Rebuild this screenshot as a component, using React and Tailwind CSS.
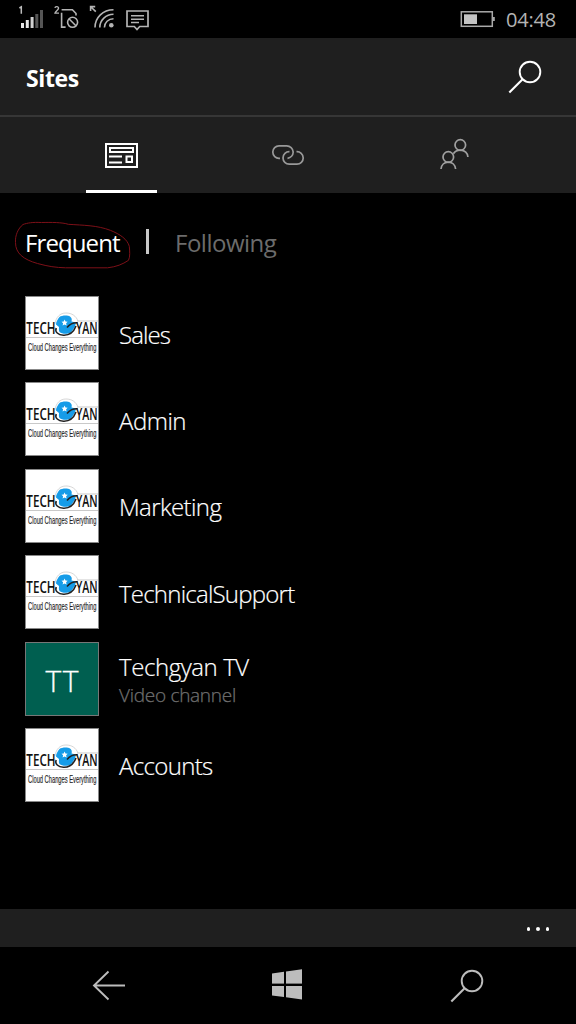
import React from "react";

function SearchIcon({ className }) {
  return (
    <svg className={className} width="34" height="34" viewBox="0 0 34 34" fill="none" stroke="currentColor">
      <circle cx="22" cy="12" r="10.3" strokeWidth="1.9" />
      <path d="M14.6 19.2 1.3 32.4" strokeWidth="2.1" />
    </svg>
  );
}

function StatusBar() {
  return (
    <div className="flex h-[38px] shrink-0 items-start justify-between bg-black text-[#b4b4b4]">
      <div className="flex">
        <svg className="ml-4" width="30" height="34" viewBox="16 0 30 34">
          <path d="M19.4 8 21.3 6.8v7" fill="none" stroke="#bbb" strokeWidth="1.5" />
          <path d="M21 23h3v5h-3zM25.8 20h3v8h-3z" fill="#e8e8e8" />
          <path d="M30.6 17h3v11h-3z" fill="#d0d0d0" />
          <path d="M35.3 14h3v14h-3zM40 10h3v18h-3z" fill="#555" />
        </svg>
        <svg className="ml-[6px]" width="30" height="34" viewBox="52 0 30 34" fill="none" stroke="currentColor" strokeWidth="1.6">
          <path d="M55 8c.2-2 3.8-1.8 3.5.4-.2 1.6-3.1 3-3.5 4.7h4" strokeWidth="1.4" />
          <path d="M61.6 12.8v14.3h4M61.6 9.8h10.8l3.6 3.7v2" />
          <circle cx="72.6" cy="22.3" r="5" />
          <path d="m69.2 19 6.7 6.7" />
        </svg>
        <svg className="ml-[6px]" width="30" height="34" viewBox="88 0 30 34" fill="none" stroke="currentColor" strokeWidth="1.6">
          <path d="M90.6 11V6.6h4.6M91 7l4.8 4.6" />
          <path d="M95 27.5C95 17.5 103 9.7 113.5 9.7M99.8 27.5c0-7.2 6.2-13.2 13.7-13.2M104.4 27.5c0-4.9 4.1-8.8 9.1-8.8" />
          <circle cx="111.3" cy="25.3" r="2.3" fill="currentColor" stroke="none" />
        </svg>
        <svg className="ml-[6px]" width="30" height="34" viewBox="124 0 30 34" fill="none" stroke="currentColor" strokeWidth="1.7">
          <path d="M127 11h21v15.5h-8.3l-2.7 3-2.7-3H127z" />
          <path d="M131 15.7h13M131 19.2h13M131 22.5h8" strokeWidth="1.4" />
        </svg>
      </div>
      <div className="flex">
        <svg width="40" height="34" viewBox="458 0 40 34">
          <rect x="461.3" y="11.8" width="31" height="14.5" fill="none" stroke="#aaa" strokeWidth="1.5" />
          <path d="M493 17h1.8v4H493z" fill="#aaa" />
          <rect x="464" y="14.3" width="13" height="9.7" fill="#c4c4c4" />
        </svg>
        <span className="ml-2 mt-[6px] w-[70px] whitespace-nowrap text-[20px] leading-[28px] tracking-[-0.2px]">04:48</span>
      </div>
    </div>
  );
}

function Tabs() {
  return (
    <div className="flex h-[76px] shrink-0 bg-[#1f1f1f]">
      <button className="ml-[86px] flex h-[76px] w-[71px] flex-col items-center border-b-[3px] border-white pt-[26px]">
        <svg width="33" height="25" viewBox="0 0 33 25" fill="none" stroke="#fff">
          <rect x="1" y="1" width="31" height="23" strokeWidth="2" />
          <rect x="5" y="5" width="23" height="4" strokeWidth="2" />
          <path d="M4 13.5h13M4 19.5h13" strokeWidth="2" />
          <rect x="21.5" y="13.5" width="5.5" height="5.5" strokeWidth="2" />
        </svg>
      </button>
      <button className="ml-[95px] flex h-[73px] w-[71px] justify-center pt-[26px]">
        <svg width="34" height="24" viewBox="271 143 34 24" fill="none" stroke="#999" strokeWidth="1.7">
          <path d="M280 158.3h-.7a6.2 6.2 0 0 1-6.5-6.2 6.2 6.2 0 0 1 6.3-6.2h7.4a6.5 6.5 0 0 1 6.7 6.2 6.4 6.4 0 0 1-5.7 6.2" />
          <path d="M289.5 151.7a6.2 6.2 0 0 0-6.5 6.2 6.2 6.2 0 0 0 6.2 6.2h7.8a6.2 6.2 0 0 0 6.2-6.2 6.2 6.2 0 0 0-6.7-6.2" />
        </svg>
      </button>
      <button className="ml-[96px] flex h-[73px] w-[71px] justify-center pt-[20px]">
        <svg width="34" height="36" viewBox="438 137 34 36" fill="none" stroke="#a0a0a0" strokeWidth="1.7">
          <circle cx="460.3" cy="145" r="5.3" />
          <path d="M453.4 153.8c1.5-2.4 4-3.7 6.9-3.7 4.4 0 7.6 3 7.6 6.9" />
          <circle cx="448.3" cy="157" r="5.3" />
          <path d="M441 169c.3-4.2 3.3-6.8 7.3-6.8s7 2.6 7.3 6.8" />
        </svg>
      </button>
    </div>
  );
}

function CompanyLogo() {
  return (
    <svg className="block h-full w-full overflow-visible" viewBox="0 0 72 72">
      <path d="M0 40.5h72M51 24h21" stroke="#bbb" strokeWidth=".8" />
      <path d="M29 27c1-7 5-11 11-11 6 0 10 3 12 8" fill="none" stroke="#ccc" strokeWidth=".8" />
      <path d="M33.5 20c2-1.5 8-2 10.5-.5 2 1.500 2 3 1.500 5l4.500 1-1 4-4 6c-4 2-9 1.500-11.500-.5-1-2-.5-3-.5-5l-3-2.500c0-3 2-5.500 3.500-7.500z" fill="#169ce8" />
      <path d="m38.500 22.500 1 2 2.200.3-1.600 1.500.5 2.200-2.100-1.100-1.900 1.100.5-2.200-1.600-1.500 2.200-.3z" fill="#fff" />
      <path d="M30.2 31c-1.5 4 1.8 7 7.3 7.2 6 .2 10.5-4 12.5-9.200m-9 1.5c3-3.500 6-5 10.500-4.700" fill="none" stroke="#222" strokeWidth="1.6" />
      <g fontFamily="'Open Sans', 'Noto Sans', sans-serif" fill="#111" fontSize="15.5" fontWeight="600">
        <g transform="translate(.3 36.5) scale(.75 1)">
          <text textLength="39" lengthAdjust="spacingAndGlyphs">TECH</text>
        </g>
        <g transform="translate(50 36.5) scale(.71 1)">
          <text textLength="30.5" lengthAdjust="spacingAndGlyphs">YAN</text>
        </g>
      </g>
      <g transform="translate(2 53.5) scale(.6 1)">
        <text fontFamily="'Liberation Sans', Arial, sans-serif" fontSize="10.3" fill="#222" stroke="#222" strokeWidth=".15" textLength="114" lengthAdjust="spacingAndGlyphs">Cloud Changes Everything</text>
      </g>
    </svg>
  );
}

const sites = [
  { name: "Sales", track: "tracking-[-0.9px]" },
  { name: "Admin", track: "tracking-[-0.5px]" },
  { name: "Marketing", track: "tracking-[-0.6px]" },
  { name: "TechnicalSupport", track: "tracking-[-0.77px]" },
  { name: "Techgyan TV", track: "tracking-[-0.42px]", detail: "Video channel", initials: "TT" },
  { name: "Accounts", track: "tracking-[-0.65px]" },
];

function SiteRow({ site }) {
  return (
    <li className="flex h-[74px] items-center">
      <div
        className={
          site.initials
            ? "flex h-[74px] w-[74px] items-center justify-center border border-[#777] bg-[#005f50] text-[30px] font-light [-webkit-text-stroke:0.3px_white]"
            : "h-[74px] w-[74px] border border-[#888] bg-white"
        }
      >
        {site.initials ? <span className="pl-[1.5px] pt-1 leading-none tracking-[1.5px]">{site.initials}</span> : <CompanyLogo />}
      </div>
      <div className="ml-5 flex flex-col whitespace-nowrap pt-[3px] font-light [-webkit-text-stroke:0.2px_currentColor]">
        <span className={"text-[24px] leading-[30px] " + site.track}>{site.name}</span>
        {site.detail && <span className="text-[19px] leading-[26px] tracking-[-0.28px] text-[#707070] [-webkit-text-stroke:0.25px_#707070]">{site.detail}</span>}
      </div>
    </li>
  );
}

export default function App() {
  return (
    <div className="flex h-[1024px] w-[576px] flex-col overflow-hidden bg-black font-['Open_Sans','Noto_Sans',sans-serif] text-white">
      <StatusBar />
      <header className="flex h-[79px] shrink-0 items-start justify-between border-b-2 border-[#363636] bg-[#1f1f1f]">
        <h1 className="ml-[26px] mt-[25px] text-[23px] font-bold leading-[30px] tracking-[-0.4px]">Sites</h1>
        <SearchIcon className="mr-[34px] mt-[22px]" />
      </header>
      <Tabs />
      <main className="flex-1">
        <div className="relative flex h-[103px] items-start pt-[34px] text-[24px] leading-[32px]">
          <span className="ml-[25px] w-[95px] whitespace-nowrap tracking-[-0.9px]">Frequent</span>
          <span className="ml-[26px] mt-[2px] h-[25px] w-[3px] bg-[#c8c8c8]" />
          <span className="ml-[26px] whitespace-nowrap tracking-[-0.5px] text-[#6c6c6c]">Following</span>
          <svg className="absolute left-0 top-0" width="140" height="90" viewBox="0 193 140 90" fill="none" stroke="#7d1018" strokeWidth="1">
            <path d="M41 222.5c-8-.5-14 .5-18 2-5 4-8 11-7.5 18 0 11 8 17 22 21 11 3 18 4 28 4.3h42c9-1 15-3.5 21-7.5 1.8-4 1.2-9 .8-14-2-7-9-12-19-16-13-5-27-5-42-6-6-2-17-2-27-1.8" />
          </svg>
        </div>
        <ul className="ml-[25px] flex flex-col gap-[12.4px]">
          {sites.map((site) => (
            <SiteRow key={site.name} site={site} />
          ))}
        </ul>
      </main>
      <div className="flex h-[38px] shrink-0 items-start justify-end gap-[6px] bg-[#1f1f1f] pr-[27px] pt-[18px]">
        <span className="h-[3.5px] w-[3.5px] rounded-full bg-white" />
        <span className="h-[3.5px] w-[3.5px] rounded-full bg-white" />
        <span className="h-[3.5px] w-[3.5px] rounded-full bg-white" />
      </div>
      <nav className="flex h-[77px] shrink-0 items-start text-[#bcbcbc]">
        <svg className="ml-[92px] mt-[22px]" width="34" height="33" viewBox="92 969 34 33" fill="none" stroke="currentColor" strokeWidth="1.9">
          <path d="M125 985.5H94M108.5 971.5 94 985.5l14.5 14" />
        </svg>
        <svg className="ml-[146px] mt-[22px]" width="30" height="31" viewBox="272 969 30 31" fill="currentColor">
          <path d="m272 973.5 12-1.7V983h-12zM286 971.5l16-2.2V983h-16zM272 986h12v11l-12-1.5zM286 986h16v13.5l-16-2.2z" />
          <path d="M272 983h12v1h-12zM286 983h16v1h-16z" opacity=".6" />
        </svg>
        <SearchIcon className="ml-[148px] mt-[22px]" />
      </nav>
    </div>
  );
}
